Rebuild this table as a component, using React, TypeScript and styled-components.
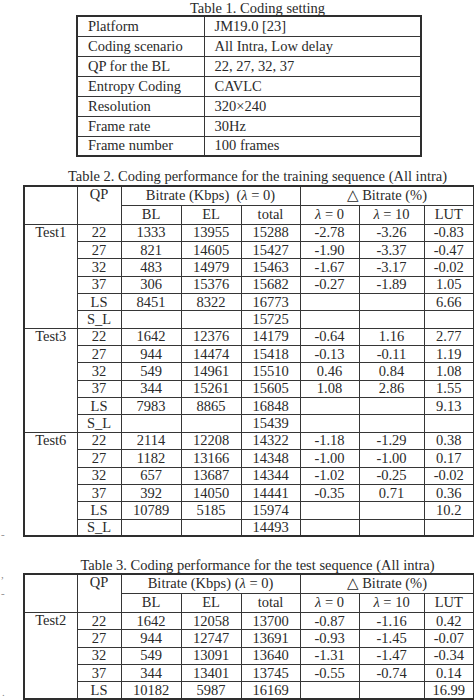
import styled, { createGlobalStyle } from 'styled-components';

const GlobalStyle = createGlobalStyle`
  html, body {
    margin: 0;
    padding: 0;
    background: #ffffff;
  }
  body {
    font-family: 'Liberation Serif', 'Times New Roman', serif;
    color: #2a2a2a;
  }
`;

type Row = { qp: string; bl: string; el: string; total: string; l0: string; l10: string; lut: string };
type Group = { name: string; rows: Row[] };

const r = (qp: string, bl: string, el: string, total: string, l0 = '', l10 = '', lut = ''): Row => ({
  qp, bl, el, total, l0, l10, lut,
});

const settings = [
  ['Platform', 'JM19.0 [23]'],
  ['Coding scenario', 'All Intra, Low delay'],
  ['QP for the BL', '22, 27, 32, 37'],
  ['Entropy Coding', 'CAVLC'],
  ['Resolution', '320×240'],
  ['Frame rate', '30Hz'],
  ['Frame number', '100 frames'],
];

const training: Group[] = [
  {
    name: 'Test1',
    rows: [
      r('22', '1333', '13955', '15288', '-2.78', '-3.26', '-0.83'),
      r('27', '821', '14605', '15427', '-1.90', '-3.37', '-0.47'),
      r('32', '483', '14979', '15463', '-1.67', '-3.17', '-0.02'),
      r('37', '306', '15376', '15682', '-0.27', '-1.89', '1.05'),
      r('LS', '8451', '8322', '16773', '', '', '6.66'),
      r('S_L', '', '', '15725'),
    ],
  },
  {
    name: 'Test3',
    rows: [
      r('22', '1642', '12376', '14179', '-0.64', '1.16', '2.77'),
      r('27', '944', '14474', '15418', '-0.13', '-0.11', '1.19'),
      r('32', '549', '14961', '15510', '0.46', '0.84', '1.08'),
      r('37', '344', '15261', '15605', '1.08', '2.86', '1.55'),
      r('LS', '7983', '8865', '16848', '', '', '9.13'),
      r('S_L', '', '', '15439'),
    ],
  },
  {
    name: 'Test6',
    rows: [
      r('22', '2114', '12208', '14322', '-1.18', '-1.29', '0.38'),
      r('27', '1182', '13166', '14348', '-1.00', '-1.00', '0.17'),
      r('32', '657', '13687', '14344', '-1.02', '-0.25', '-0.02'),
      r('37', '392', '14050', '14441', '-0.35', '0.71', '0.36'),
      r('LS', '10789', '5185', '15974', '', '', '10.2'),
      r('S_L', '', '', '14493'),
    ],
  },
];

const testing: Group[] = [
  {
    name: 'Test2',
    rows: [
      r('22', '1642', '12058', '13700', '-0.87', '-1.16', '0.42'),
      r('27', '944', '12747', '13691', '-0.93', '-1.45', '-0.07'),
      r('32', '549', '13091', '13640', '-1.31', '-1.47', '-0.34'),
      r('37', '344', '13401', '13745', '-0.55', '-0.74', '0.14'),
      r('LS', '10182', '5987', '16169', '', '', '16.99'),
    ],
  },
];

const perfCols = [53, 44, 60, 60, 59, 59, 65, 50];

const Page = styled.div`
  position: relative;
  width: 474px;
  height: 700px;
  overflow: hidden;
  display: flex;
  flex-direction: column;
`;

// captions sit a little right of the tables' centre in the scan
const Caption = styled.div<{ $top: number }>`
  margin-top: ${(p) => p.$top}px;
  padding-left: 41px;
  height: 14px;
  line-height: 16px;
  font-size: 14.5px;
  text-align: center;
  white-space: nowrap;
  flex-shrink: 0;
`;

const Grid = styled.table<{ $left: number; $width: number; $top: number }>`
  margin: ${(p) => p.$top}px 0 0 ${(p) => p.$left}px;
  width: ${(p) => p.$width}px;
  border-collapse: collapse;
  table-layout: fixed;
  border: 2px solid #2e2e2e;
  font-size: 14.5px;
  flex-shrink: 0;
`;

const Line = styled.tr<{ $h: number }>`
  height: ${(p) => p.$h}px;
`;

const Cell = styled.td<{ $align?: 'left' | 'center'; $top?: boolean; $pad?: number }>`
  border: 1.5px solid #363636;
  padding: 0 0 0 ${(p) => p.$pad ?? 0}px;
  text-align: ${(p) => p.$align ?? 'center'};
  vertical-align: ${(p) => (p.$top ? 'top' : 'middle')};
  line-height: 15px;
  white-space: nowrap;
  overflow: hidden;
`;

const Lam = styled.span`
  font-style: italic;
`;

const Mark = styled.span<{ $x: number; $y: number }>`
  position: absolute;
  left: ${(p) => p.$x}px;
  top: ${(p) => p.$y}px;
  font-size: 11px;
  line-height: 10px;
  color: #8a8a8a;
`;

const Lambda = ({ v }: { v: string }) => (
  <>
    <Lam>λ</Lam> = {v}
  </>
);

const PerfTable = ({ groups, top, wide }: { groups: Group[]; top: number; wide?: boolean }) => (
  <Grid $left={23} $width={450} $top={top}>
    <colgroup>
      {perfCols.map((w, i) => (
        <col key={i} style={{ width: w }} />
      ))}
    </colgroup>
    <tbody>
      <Line $h={19.5}>
        <Cell rowSpan={2} />
        <Cell rowSpan={2} $top>
          QP
        </Cell>
        <Cell colSpan={3}>
          Bitrate (Kbps){wide ? '\u00a0\u00a0' : ' '}(<Lambda v="0" />)
        </Cell>
        <Cell colSpan={3}>△ Bitrate (%)</Cell>
      </Line>
      <Line $h={19}>
        <Cell>BL</Cell>
        <Cell>EL</Cell>
        <Cell>total</Cell>
        <Cell>
          <Lambda v="0" />
        </Cell>
        <Cell>
          <Lambda v="10" />
        </Cell>
        <Cell>LUT</Cell>
      </Line>
      {groups.map((g) =>
        g.rows.map((row, i) => (
          <Line $h={17.35} key={g.name + i}>
            {i === 0 && (
              <Cell rowSpan={g.rows.length} $top>
                {g.name}
              </Cell>
            )}
            <Cell>{row.qp}</Cell>
            <Cell>{row.bl}</Cell>
            <Cell>{row.el}</Cell>
            <Cell>{row.total}</Cell>
            <Cell>{row.l0}</Cell>
            <Cell>{row.l10}</Cell>
            <Cell>{row.lut}</Cell>
          </Line>
        ))
      )}
    </tbody>
  </Grid>
);

export default function App() {
  return (
    <Page>
      <GlobalStyle />
      <Caption $top={0}>Table 1. Coding setting</Caption>
      <Grid $left={76} $width={344} $top={1}>
        <colgroup>
          <col style={{ width: 127 }} />
          <col style={{ width: 217 }} />
        </colgroup>
        <tbody>
          {settings.map(([k, v]) => (
            <Line $h={20} key={k}>
              <Cell $align="left" $pad={10}>
                {k}
              </Cell>
              <Cell $align="left" $pad={10}>
                {v}
              </Cell>
            </Line>
          ))}
        </tbody>
      </Grid>

      <Caption $top={11.4}>Table 2. Coding performance for the training sequence (All intra)</Caption>
      <PerfTable groups={training} top={2.3} wide />

      <Caption $top={19.2}>Table 3. Coding performance for the test sequence (All intra)</Caption>
      <PerfTable groups={testing} top={2.3} />

      <Mark $x={1} $y={529}>-</Mark>
      <Mark $x={1} $y={569}>,</Mark>
      <Mark $x={1} $y={588}>-</Mark>
      <Mark $x={2} $y={687}>.</Mark>
    </Page>
  );
}
